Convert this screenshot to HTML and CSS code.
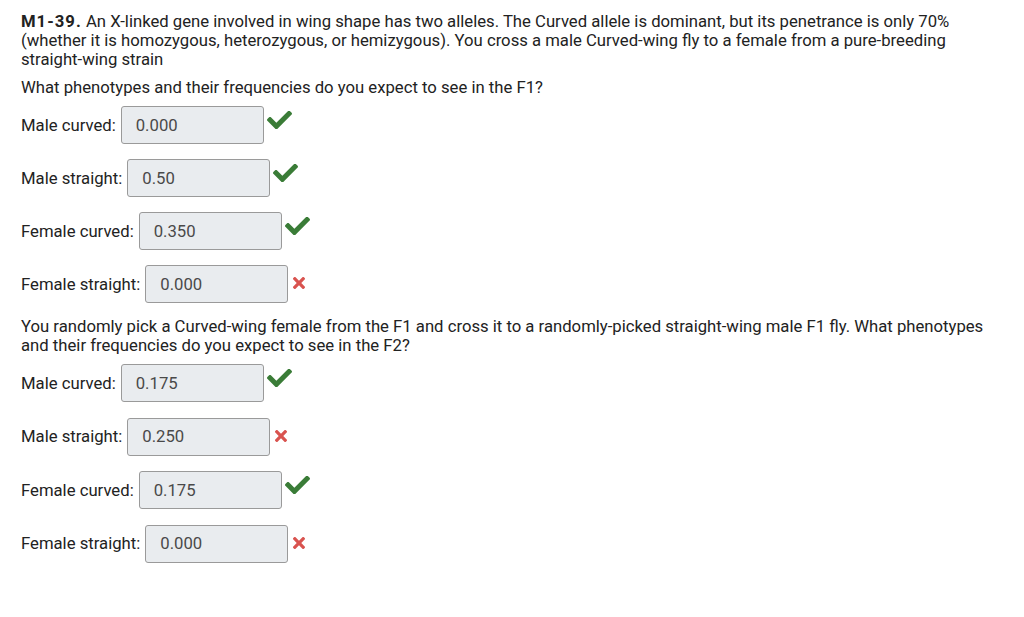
FILE: index.html
```html
<!DOCTYPE html>
<html>
<head>
<meta charset="utf-8">
<link rel="stylesheet" href="styles.css">
</head>
<body>
<div class="page">
  <p class="para"><b class="qid">M1-39.</b> An X-linked gene involved in wing shape has two alleles. The Curved allele is dominant, but its penetrance is only 70% (whether it is homozygous, heterozygous, or hemizygous). You cross a male Curved-wing fly to a female from a pure-breeding straight-wing strain</p>
  <p class="para">What phenotypes and their frequencies do you expect to see in the F1?</p>
  <div class="rows">
    <div class="row"><span class="label">Male curved:</span><span class="answer">0.000</span><svg class="mark check" viewBox="0 72 512 368"><path d="M173.898 439.404l-166.4-166.4c-9.997-9.997-9.997-26.206 0-36.204l36.203-36.204c9.997-9.998 26.207-9.998 36.204 0L192 312.69 432.095 72.596c9.997-9.997 26.207-9.997 36.204 0l36.203 36.204c9.997 9.997 9.997 26.206 0 36.204l-294.4 294.401c-9.998 9.997-26.207 9.997-36.204-.001z"/></svg></div>
    <div class="row"><span class="label">Male straight:</span><span class="answer">0.50</span><svg class="mark check" viewBox="0 72 512 368"><path d="M173.898 439.404l-166.4-166.4c-9.997-9.997-9.997-26.206 0-36.204l36.203-36.204c9.997-9.998 26.207-9.998 36.204 0L192 312.69 432.095 72.596c9.997-9.997 26.207-9.997 36.204 0l36.203 36.204c9.997 9.997 9.997 26.206 0 36.204l-294.4 294.401c-9.998 9.997-26.207 9.997-36.204-.001z"/></svg></div>
    <div class="row"><span class="label">Female curved:</span><span class="answer">0.350</span><svg class="mark check" viewBox="0 72 512 368"><path d="M173.898 439.404l-166.4-166.4c-9.997-9.997-9.997-26.206 0-36.204l36.203-36.204c9.997-9.998 26.207-9.998 36.204 0L192 312.69 432.095 72.596c9.997-9.997 26.207-9.997 36.204 0l36.203 36.204c9.997 9.997 9.997 26.206 0 36.204l-294.4 294.401c-9.998 9.997-26.207 9.997-36.204-.001z"/></svg></div>
    <div class="row"><span class="label">Female straight:</span><span class="answer">0.000</span><svg class="mark cross" viewBox="0 80 352 352"><path d="M242.72 256l100.07-100.07c12.28-12.28 12.28-32.19 0-44.48l-22.240-22.24c-12.28-12.28-32.19-12.28-44.48 0L176 189.28 75.93 89.21c-12.28-12.28-32.19-12.28-44.48 0L9.21 111.45c-12.28 12.28-12.28 32.19 0 44.48L109.28 256 9.21 356.07c-12.28 12.28-12.28 32.19 0 44.48l22.24 22.24c12.28 12.28 32.2 12.28 44.48 0L176 322.72l100.07 100.07c12.28 12.28 32.2 12.28 44.48 0l22.24-22.24c12.28-12.28 12.28-32.19 0-44.48L242.72 256z"/></svg></div>
  </div>
  <p class="para para-f2">You randomly pick a Curved-wing female from the F1 and cross it to a randomly-picked straight-wing male F1 fly. What phenotypes and their frequencies do you expect to see in the F2?</p>
  <div class="rows rows-f2">
    <div class="row"><span class="label">Male curved:</span><span class="answer">0.175</span><svg class="mark check" viewBox="0 72 512 368"><path d="M173.898 439.404l-166.4-166.4c-9.997-9.997-9.997-26.206 0-36.204l36.203-36.204c9.997-9.998 26.207-9.998 36.204 0L192 312.69 432.095 72.596c9.997-9.997 26.207-9.997 36.204 0l36.203 36.204c9.997 9.997 9.997 26.206 0 36.204l-294.4 294.401c-9.998 9.997-26.207 9.997-36.204-.001z"/></svg></div>
    <div class="row"><span class="label">Male straight:</span><span class="answer">0.250</span><svg class="mark cross" viewBox="0 80 352 352"><path d="M242.72 256l100.07-100.07c12.28-12.28 12.28-32.19 0-44.48l-22.240-22.24c-12.28-12.28-32.19-12.28-44.48 0L176 189.28 75.93 89.21c-12.28-12.28-32.19-12.28-44.48 0L9.21 111.45c-12.28 12.28-12.28 32.19 0 44.48L109.28 256 9.21 356.07c-12.28 12.28-12.28 32.19 0 44.48l22.24 22.24c12.28 12.28 32.2 12.28 44.48 0L176 322.72l100.07 100.07c12.28 12.28 32.2 12.28 44.48 0l22.24-22.24c12.28-12.28 12.28-32.19 0-44.48L242.72 256z"/></svg></div>
    <div class="row"><span class="label">Female curved:</span><span class="answer">0.175</span><svg class="mark check" viewBox="0 72 512 368"><path d="M173.898 439.404l-166.4-166.4c-9.997-9.997-9.997-26.206 0-36.204l36.203-36.204c9.997-9.998 26.207-9.998 36.204 0L192 312.69 432.095 72.596c9.997-9.997 26.207-9.997 36.204 0l36.203 36.204c9.997 9.997 9.997 26.206 0 36.204l-294.4 294.401c-9.998 9.997-26.207 9.997-36.204-.001z"/></svg></div>
    <div class="row"><span class="label">Female straight:</span><span class="answer">0.000</span><svg class="mark cross" viewBox="0 80 352 352"><path d="M242.72 256l100.07-100.07c12.28-12.28 12.28-32.19 0-44.48l-22.240-22.24c-12.28-12.28-32.19-12.28-44.48 0L176 189.28 75.93 89.21c-12.28-12.28-32.19-12.28-44.48 0L9.21 111.45c-12.28 12.28-12.28 32.19 0 44.48L109.28 256 9.21 356.07c-12.28 12.28-12.28 32.19 0 44.48l22.24 22.24c12.28 12.28 32.2 12.28 44.48 0L176 322.72l100.07 100.07c12.28 12.28 32.2 12.28 44.48 0l22.24-22.24c12.28-12.28 12.28-32.19 0-44.48L242.72 256z"/></svg></div>
  </div>
</div>
</body>
</html>
```

FILE: styles.css
```css
html, body {
  margin: 0;
  padding: 0;
  background: #ffffff;
}

.page {
  font-family: Roboto, "Liberation Sans", sans-serif;
  font-size: 16.7px;
  line-height: 19px;
  color: #222222;
  padding: 12px 0 0 21px;
  width: 985px;
}

.para {
  margin: 0 0 9px 0;
}

.qid {
  font-weight: 700;
  letter-spacing: 1px;
}

.para-f2 {
  margin-top: 14px;
  margin-bottom: 9px;
}

.rows {
  display: flex;
  flex-direction: column;
  gap: 15px;
}

.rows-f2 {
  gap: 15.5px;
}

.row {
  display: flex;
  align-items: flex-start;
}

.label {
  align-self: center;
  margin-right: 5px;
}

.answer {
  box-sizing: border-box;
  width: 143px;
  height: 38px;
  display: flex;
  align-items: center;
  padding: 0 14px;
  background: #e9ecef;
  border: 1px solid #9a9a9a;
  border-radius: 3px;
  color: #494949;
}

.mark {
  display: block;
  margin-left: 3px;
}

.check {
  width: 25px;
  height: 18px;
  margin-top: 5px;
  fill: #3a7c37;
}

.cross {
  width: 12px;
  height: 12px;
  margin-top: 12px;
  margin-left: 5px;
  fill: #d9534f;
}
```
